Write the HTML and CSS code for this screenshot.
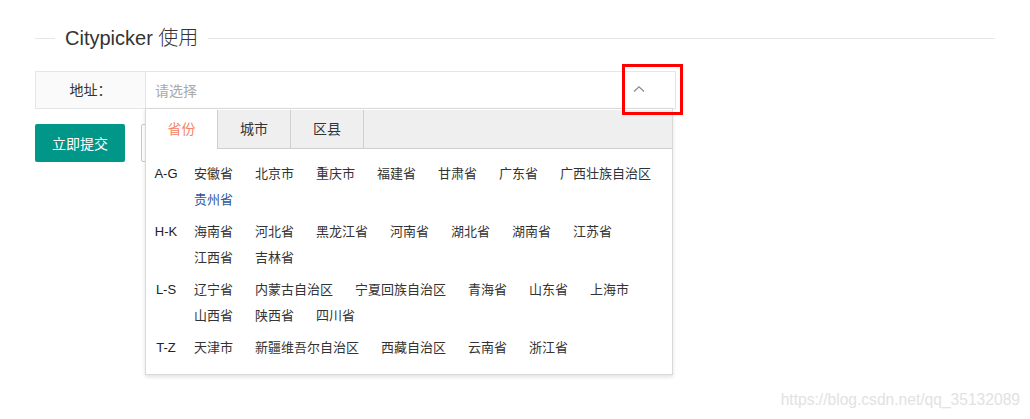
FILE: index.html
```html
<!DOCTYPE html>
<html lang="zh-CN">
<head>
<meta charset="utf-8">
<title>Citypicker 使用</title>
<link rel="stylesheet" href="styles.css">
</head>
<body>
<div class="page">
  <div class="title">
    <span class="title-line title-line-short"></span>
    <span class="title-text">Citypicker 使用</span>
    <span class="title-line title-line-long"></span>
  </div>

  <form class="form">
    <div class="form-item">
      <label class="form-label">地址：</label>
      <div class="field">
        <div class="input">
          <span class="placeholder">请选择</span>
          <svg class="arrow" width="12" height="8" viewBox="0 0 12 8"><path d="M1 6.5 L6 1.8 L11 6.5" fill="none" stroke="#8a8a8a" stroke-width="1.2"/></svg>
        </div>
        <div class="highlight"></div>
        <div class="dropdown">
          <div class="tabs">
            <span class="tab tab-active">省份</span>
            <span class="tab">城市</span>
            <span class="tab">区县</span>
          </div>
          <div class="panel">
            <dl class="group">
              <dt>A-G</dt>
              <dd>
                <a>安徽省</a><a>北京市</a><a>重庆市</a><a>福建省</a><a>甘肃省</a><a>广东省</a><a>广西壮族自治区</a><a class="hover">贵州省</a>
              </dd>
            </dl>
            <dl class="group">
              <dt>H-K</dt>
              <dd>
                <a>海南省</a><a>河北省</a><a>黑龙江省</a><a>河南省</a><a>湖北省</a><a>湖南省</a><a>江苏省</a><a>江西省</a><a>吉林省</a>
              </dd>
            </dl>
            <dl class="group">
              <dt>L-S</dt>
              <dd>
                <a>辽宁省</a><a>内蒙古自治区</a><a>宁夏回族自治区</a><a>青海省</a><a>山东省</a><a>上海市</a><a>山西省</a><a>陕西省</a><a>四川省</a>
              </dd>
            </dl>
            <dl class="group">
              <dt>T-Z</dt>
              <dd>
                <a>天津市</a><a>新疆维吾尔自治区</a><a>西藏自治区</a><a>云南省</a><a>浙江省</a>
              </dd>
            </dl>
          </div>
        </div>
      </div>
    </div>
    <div class="form-item buttons">
      <button type="button" class="btn btn-primary">立即提交</button>
      <button type="button" class="btn btn-reset">重置</button>
    </div>
  </form>

  <div class="watermark">https://blog.csdn.net/qq_35132089</div>
</div>
</body>
</html>
```

FILE: styles.css
```css
html, body {
  margin: 0;
  padding: 0;
  background: #fff;
}

body {
  font-family: "Liberation Sans", "Noto Sans CJK SC", sans-serif;
  color: #333;
  font-size: 14px;
}

.page {
  position: relative;
  width: 1030px;
  height: 419px;
  box-sizing: border-box;
  padding: 26px 35px 0;
  overflow: hidden;
}

/* ---------- title (fieldset legend look) ---------- */
.title {
  display: flex;
  align-items: center;
  height: 24px;
}

.title-line {
  height: 1px;
  background: #e6e6e6;
}

.title-line-short {
  width: 20px;
}

.title-line-long {
  flex: 1;
}

.title-text {
  padding: 0 10px;
  font-size: 20px;
  font-weight: 300;
  line-height: 24px;
  color: #333;
  white-space: nowrap;
}

/* ---------- form ---------- */
.form {
  margin-top: 21px;
}

.form-item {
  display: flex;
  margin-bottom: 15px;
}

.form-label {
  box-sizing: border-box;
  width: 110px;
  height: 38px;
  line-height: 36px;
  text-align: center;
  background: #fafafa;
  border: 1px solid #e6e6e6;
  border-right: none;
  color: #333;
  font-size: 14px;
}

.field {
  position: relative;
  width: 531px;
}

.input {
  box-sizing: border-box;
  height: 38px;
  border: 1px solid #e6e6e6;
  display: flex;
  align-items: center;
  padding-left: 9px;
  background: #fff;
}

.placeholder {
  color: #a9a9a9;
  font-size: 14px;
  flex: 1;
}

.arrow {
  margin-right: 30px;
  margin-top: -2px;
}

.highlight {
  position: absolute;
  left: 477px;
  top: -7px;
  width: 61px;
  height: 51px;
  box-sizing: border-box;
  border: 3px solid #ff0000;
  z-index: 3;
}

/* ---------- dropdown ---------- */
.dropdown {
  position: absolute;
  left: 0;
  top: 37px;
  width: 528px;
  box-sizing: border-box;
  background: #fff;
  border: 1px solid #d9d9d9;
  box-shadow: 0 2px 4px rgba(0, 0, 0, 0.12);
  z-index: 2;
}

.tabs {
  display: flex;
  height: 38px;
  margin-top: 1px;
  background: #efefef;
  border-bottom: 1px solid #cfcfcf;
}

.tab {
  box-sizing: border-box;
  width: 73px;
  height: 38px;
  line-height: 38px;
  text-align: center;
  font-size: 14px;
  color: #333;
  border-right: 1px solid #cfcfcf;
}

.tab-active {
  width: 72px;
  height: 39px;
  background: #fff;
  color: #f5856a;
}

.panel {
  padding: 12px 8px 13px 3px;
}

.group {
  display: flex;
  margin: 0 0 6px;
  font-size: 13px;
  line-height: 26px;
}

.group:last-child {
  margin-bottom: 0;
}

.group dt {
  width: 34px;
  text-align: center;
  color: #222;
}

.group dd {
  flex: 1;
  margin: 0 0 0 11px;
  display: flex;
  flex-wrap: wrap;
  column-gap: 22px;
}

.group a {
  color: #333;
  white-space: nowrap;
}

.group a.hover {
  color: #2f5597;
}

/* ---------- buttons ---------- */
.buttons {
  align-items: center;
}

.btn {
  box-sizing: border-box;
  height: 38px;
  padding: 0 17px;
  border-radius: 2px;
  font-family: inherit;
  font-size: 14px;
  white-space: nowrap;
  cursor: pointer;
}

.btn-primary {
  background: #009688;
  color: #fff;
  border: none;
}

.btn-reset {
  margin-left: 16px;
  background: #fff;
  color: #555;
  border: 1px solid #c9c9c9;
}

/* ---------- watermark ---------- */
.watermark {
  position: absolute;
  right: 10px;
  bottom: 10px;
  font-size: 15.6px;
  color: #e2e2e2;
}
```
